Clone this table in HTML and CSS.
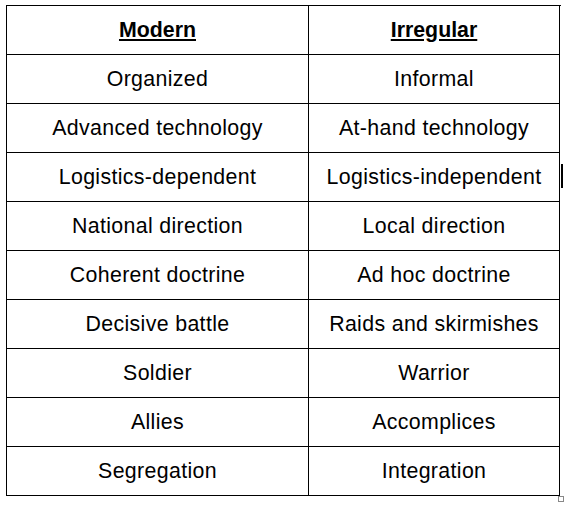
FILE: index.html
```html
<!DOCTYPE html>
<html>
<head>
<meta charset="utf-8">
<link rel="stylesheet" href="styles.css">
</head>
<body>
<div class="sheet">
  <div class="grid">
    <div class="cell head"><span>Modern</span></div>
    <div class="cell head"><span>Irregular</span></div>
    <div class="cell">Organized</div>
    <div class="cell">Informal</div>
    <div class="cell">Advanced technology</div>
    <div class="cell">At-hand technology</div>
    <div class="cell">Logistics-dependent</div>
    <div class="cell">Logistics-independent</div>
    <div class="cell">National direction</div>
    <div class="cell">Local direction</div>
    <div class="cell">Coherent doctrine</div>
    <div class="cell">Ad hoc doctrine</div>
    <div class="cell">Decisive battle</div>
    <div class="cell">Raids and skirmishes</div>
    <div class="cell">Soldier</div>
    <div class="cell">Warrior</div>
    <div class="cell">Allies</div>
    <div class="cell">Accomplices</div>
    <div class="cell">Segregation</div>
    <div class="cell">Integration</div>
  </div>
  <div class="caret"></div>
  <div class="handle"></div>
</div>
</body>
</html>
```

FILE: styles.css
```css
html, body {
  margin: 0;
  padding: 0;
  background: #fff;
}
.sheet {
  position: relative;
  width: 564px;
  height: 506px;
  padding: 5px 0 0 6px;
  box-sizing: border-box;
}
.grid {
  display: grid;
  grid-template-columns: 302px 251px;
  grid-auto-rows: 49px;
  width: 554px;
  border-left: 1px solid #000;
  border-top: 1px solid #000;
  font-family: "Liberation Sans", Arial, sans-serif;
  font-size: 16pt;
  color: #000;
}
.cell {
  box-sizing: border-box;
  border-right: 1px solid #000;
  border-bottom: 1px solid #000;
  display: flex;
  align-items: center;
  justify-content: center;
  white-space: nowrap;
  letter-spacing: 0.35px;
}
.head {
  letter-spacing: 0;
}
.head span {
  font-weight: bold;
  text-decoration: underline;
}
.caret {
  position: absolute;
  left: 561px;
  top: 164px;
  width: 2px;
  height: 24px;
  background: #000;
}
.handle {
  position: absolute;
  left: 558px;
  top: 496px;
  width: 4px;
  height: 4px;
  border: 1px solid #888;
  background: #fff;
}
```
